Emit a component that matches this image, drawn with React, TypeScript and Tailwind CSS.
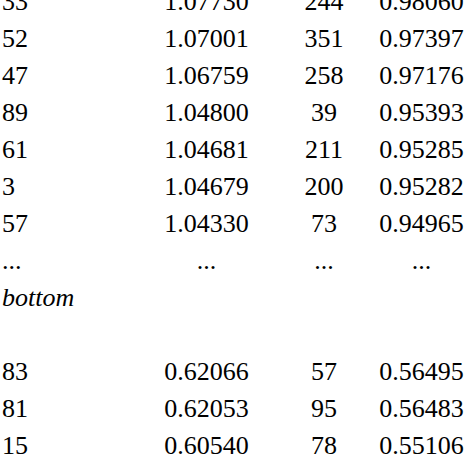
const top = [
  ["33", "1.07730", "244", "0.98060"],
  ["52", "1.07001", "351", "0.97397"],
  ["47", "1.06759", "258", "0.97176"],
  ["89", "1.04800", "39", "0.95393"],
  ["61", "1.04681", "211", "0.95285"],
  ["3", "1.04679", "200", "0.95282"],
  ["57", "1.04330", "73", "0.94965"],
  ["...", "...", "...", "..."],
];

const bottom = [
  ["83", "0.62066", "57", "0.56495"],
  ["81", "0.62053", "95", "0.56483"],
  ["15", "0.60540", "78", "0.55106"],
];

function Row({ cells }: { cells: string[] }) {
  return (
    <div className="grid h-[37px] grid-cols-[136px_141px_94px_101px] leading-[37px]">
      <div className="pl-[2px]">{cells[0]}</div>
      <div className="text-center">{cells[1]}</div>
      <div className="text-center">{cells[2]}</div>
      <div className="text-center">{cells[3]}</div>
    </div>
  );
}

export default function App() {
  return (
    <div className="h-[474px] w-[474px] overflow-hidden bg-white text-black">
      <div className="-mt-[17px] flex flex-col font-['Liberation_Serif',serif] text-[26px]">
        {top.map((r, i) => (
          <Row key={i} cells={r} />
        ))}
        <div className="h-[37px] pl-[2px] italic leading-[37px]">bottom</div>
        <div className="h-[37px]" />
        {bottom.map((r, i) => (
          <Row key={i} cells={r} />
        ))}
      </div>
    </div>
  );
}
